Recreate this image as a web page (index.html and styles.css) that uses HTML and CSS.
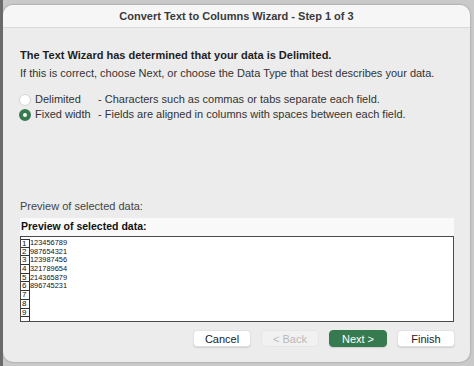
FILE: index.html
```html
<!DOCTYPE html>
<html lang="en">
<head>
    <meta charset="UTF-8">
    <title>Convert Text to Columns Wizard</title>
    <link rel="stylesheet" href="styles.css">
</head>
<body>

    <div class="dialog">
        <div class="titlebar">Convert Text to Columns Wizard - Step 1 of 3</div>

        <div class="content">
            <div class="lead">The Text Wizard has determined that your data is Delimited.</div>
            <div class="hint">If this is correct, choose Next, or choose the Data Type that best describes your data.</div>

            <div class="options">
                <label class="option">
                    <span class="radio"></span>
                    <span class="opt-name">Delimited</span>
                    <span class="opt-desc">- Characters such as commas or tabs separate each field.</span>
                </label>
                <label class="option">
                    <span class="radio checked"></span>
                    <span class="opt-name">Fixed width</span>
                    <span class="opt-desc">- Fields are aligned in columns with spaces between each field.</span>
                </label>
            </div>

            <div class="preview-label">Preview of selected data:</div>
            <div class="preview-head">Preview of selected data:</div>
            <div class="preview-grid">
                <div class="row"><span class="num">1</span><span class="val">123456789</span></div>
                <div class="row"><span class="num">2</span><span class="val">987654321</span></div>
                <div class="row"><span class="num">3</span><span class="val">123987456</span></div>
                <div class="row"><span class="num">4</span><span class="val">321789654</span></div>
                <div class="row"><span class="num">5</span><span class="val">214365879</span></div>
                <div class="row"><span class="num">6</span><span class="val">896745231</span></div>
                <div class="row"><span class="num">7</span><span class="val"></span></div>
                <div class="row"><span class="num">8</span><span class="val"></span></div>
                <div class="row"><span class="num">9</span><span class="val"></span></div>
                <div class="row last"><span class="num"></span><span class="val"></span></div>
            </div>

            <div class="buttons">
                <button class="btn">Cancel</button>
                <button class="btn" disabled>&lt; Back</button>
                <button class="btn btn-primary">Next &gt;</button>
                <button class="btn">Finish</button>
            </div>
        </div>
    </div>

</body>
</html>
```

FILE: styles.css
```css
:root { --text: #2b2b2b; --green: #387a4f; --border: #d6d6d6; }
* { box-sizing: border-box; font-family: 'Liberation Sans', Arial, sans-serif; }

body { margin: 0; width: 474px; height: 366px; overflow: hidden; background: #c9c9c9; border-left: 3px solid #6a6a6a; padding-top: 5px; }

/* DIALOG */
.dialog { width: 467px; height: 357px; background: #ececec; border-radius: 10px; overflow: hidden; box-shadow: 0 0 2px rgba(0,0,0,0.35); }
.titlebar { height: 23px; line-height: 22px; background: #f6f6f6; border-bottom: 1px solid #dadada; text-align: center; font-size: 11px; font-weight: 700; color: #3a3a3a; }

.content { padding: 20px 13px 0 17px; color: var(--text); font-size: 11px; }
.lead { font-weight: 700; line-height: 14px; color: #1e1e1e; }
.hint { line-height: 14px; margin-top: 4px; color: #333; }

/* OPCOES */
.options { margin-top: 12px; }
.option { display: flex; align-items: center; height: 15px; line-height: 15px; color: #333; }
.radio { width: 12px; height: 12px; margin-left: -1px; margin-right: 4px; border-radius: 50%; background: white; border: 1px solid #d4d4d4; flex-shrink: 0; }
.radio.checked { border: 4px solid var(--green); background: white; }
.opt-name { width: 63px; flex-shrink: 0; }

/* PREVIEW */
.preview-label { margin-top: 77px; line-height: 14px; color: #444; }
.preview-head { margin-top: 5px; width: 434px; height: 18px; line-height: 17px; background: #f9f9f9; padding-left: 1px; font-family: Arial, 'Liberation Sans', sans-serif; font-size: 10.5px; font-weight: 700; color: #111; }
.preview-grid { width: 434px; height: 86px; background: white; border: 1px solid #4a4a4a; padding-top: 2px; overflow: hidden; }
.row { display: flex; height: 8.7px; }
.num { width: 9px; flex-shrink: 0; border-right: 1px solid #333; border-bottom: 1px solid #333; font-size: 8px; line-height: 8px; padding-left: 1px; color: #111; }
.row:first-child .num { border-top: 1px solid #333; }
.val { font-size: 7.4px; line-height: 8.5px; color: #111; }

/* BOTOES */
.buttons { display: flex; justify-content: flex-end; gap: 10px; margin-top: 8px; padding-right: 2px; }
.btn { width: 58px; height: 17px; padding: 0; border-radius: 4px; font-size: 11px; cursor: pointer; border: 1px solid #e2e2e2; background: white; color: #222; box-shadow: 0 1px 1px rgba(0,0,0,0.12); }
.btn:disabled { background: #f1f1f1; color: #b8b8b8; box-shadow: none; border-color: #e6e6e6; }
.btn-primary { background: var(--green); border-color: var(--green); color: white; }
```
